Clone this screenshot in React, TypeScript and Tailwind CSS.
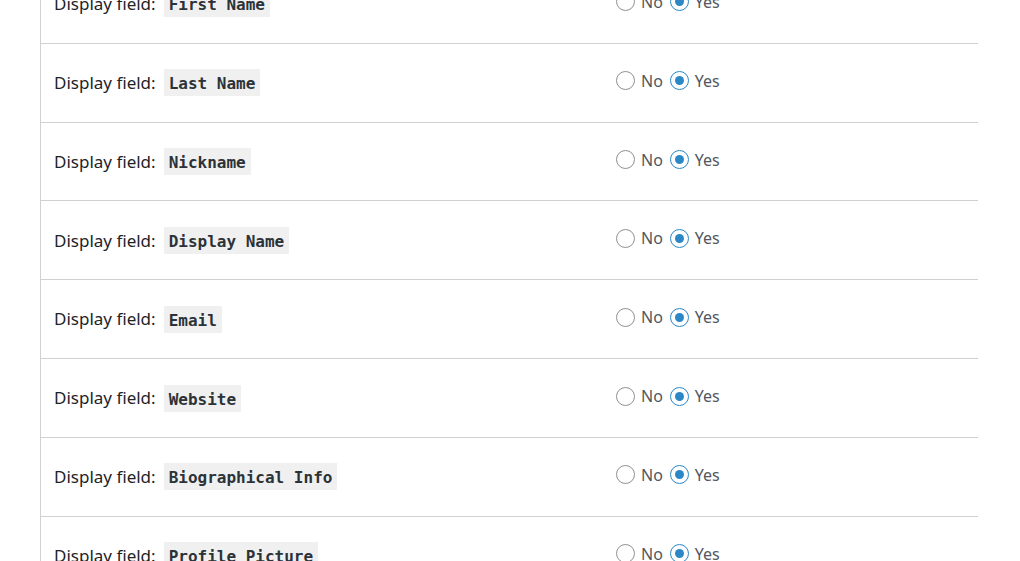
import React from 'react';

const FIELDS = [
  'First Name',
  'Last Name',
  'Nickname',
  'Display Name',
  'Email',
  'Website',
  'Biographical Info',
  'Profile Picture',
];

const Radio: React.FC<{ checked?: boolean; label: string }> = ({ checked, label }) => (
  <label className="flex items-center gap-[6px]">
    <span
      className={`w-[19px] h-[19px] rounded-full border flex items-center justify-center bg-white ${
        checked ? 'border-[#2c87c6]' : 'border-[#8c8f94]'
      }`}
    >
      {checked && <span className="w-[9px] h-[9px] rounded-full bg-[#2c87c6]" />}
    </span>
    <span>{label}</span>
  </label>
);

export default function App() {
  return (
    <div className="w-[1020px] h-[561px] overflow-hidden bg-white text-[#1d2327] font-['Noto_Sans',sans-serif]">
      <div className="ml-[40px] w-[938px] border-l border-[#d0d0d0] -mt-[35px]">
        {FIELDS.map((f) => (
          <div key={f} className="h-[78.83px] border-b border-[#d0d0d0] flex items-center">
            <div className="w-[561px] pl-[13px] flex items-center gap-[8px] text-[17px]">
              <span>Display field:</span>
              <code className="block bg-[#f0f0f1] px-[5px] pt-[4px] pb-[2px] leading-[21px] font-['DejaVu_Sans_Mono',monospace] font-bold text-[16px] text-[#2c3338]">
                {f}
              </code>
            </div>
            <div className="flex items-center gap-[7px] text-[16px] text-[#50575e] -mt-[4px] ml-[14px]">
              <Radio label="No" />
              <Radio checked label="Yes" />
            </div>
          </div>
        ))}
      </div>
    </div>
  );
}
